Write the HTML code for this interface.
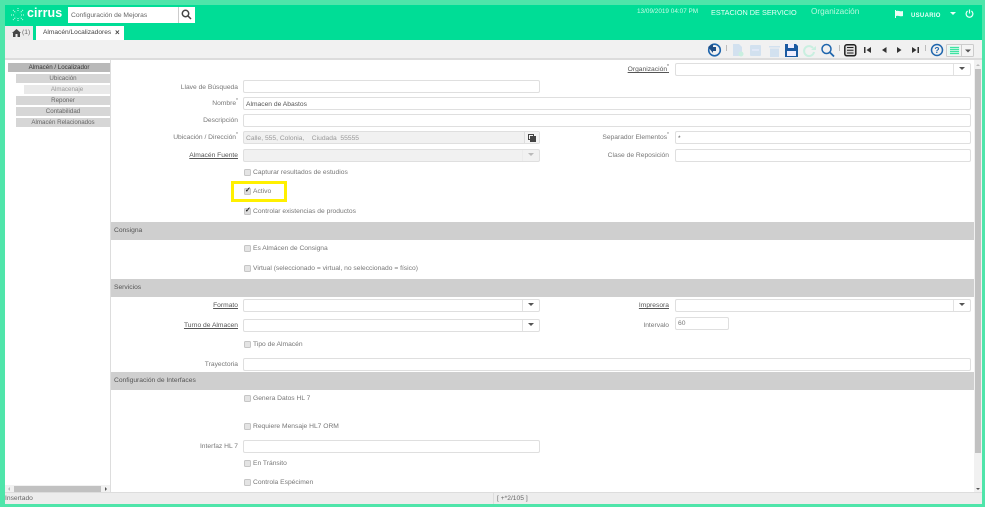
<!DOCTYPE html>
<html><head><meta charset="utf-8"><style>
html,body{margin:0;padding:0;width:985px;height:507px;overflow:hidden;background:#4fe5aa}
body{position:relative;font-family:"Liberation Sans",sans-serif;font-size:6.7px;color:#777}
#w{left:0;top:0;width:985px;height:507px;filter:blur(.35px)}
div,span,svg{position:absolute;box-sizing:border-box}
.t{white-space:nowrap;line-height:14px;height:14px}
.l{white-space:nowrap;line-height:14px;height:14px;right:747px;text-align:right}
.r{white-space:nowrap;line-height:14px;height:14px;right:316px;text-align:right}
.u{text-decoration:underline;color:#555}
.i{background:#fff;border:1px solid #dfdfdf;border-radius:2px;height:13px}
.d{background:#f1f1f1}
.b{border-left:1px solid #e2e2e2;top:0;bottom:0;right:0;width:17px}
.b:after{content:"";position:absolute;left:5px;top:3px;border:3px solid transparent;border-top:3px solid #555;border-bottom:0}
.c{left:244px;width:6.5px;height:6.5px;background:#e4e4e4;border:1px solid #c6c6c6;border-radius:1.5px}
.k{left:253px}
.s{left:111px;width:863px;height:18px;background:#cfcfcf;color:#555;padding:0 0 0 3px;line-height:18px;white-space:nowrap}
.m{text-align:center;height:9px;line-height:9px;right:875px;color:#666;white-space:nowrap;font-size:6.2px}
sup{font-size:5px;line-height:0}
</style></head><body><div id="w">
<div style="left:5px;top:5px;width:977px;height:499px;background:#fff"></div>
<div style="left:5px;top:5px;width:977px;height:35px;background:#00dd96"></div>

<svg style="left:10px;top:7px" width="16" height="16" viewBox="0 0 16 16" stroke="#d8fff0" stroke-width="1" fill="#e8fff6"><path d="M8 1v4M8 11v4M1 8h4M11 8h4M3 3l3 3M13 3l-3 3M3 13l3-3M13 13l-3-3" stroke-dasharray="1 1"/></svg>
<div class="t" style="left:27px;top:6px;color:#fff;font-size:12.5px;font-weight:bold;line-height:15px;height:15px;letter-spacing:.1px">cirrus</div>
<div style="left:68px;top:7px;width:110px;height:16px;background:#fff"></div>
<div class="t" style="left:71px;top:9px;color:#666">Configuración de Mejoras</div>
<div style="left:178px;top:7px;width:17px;height:16px;background:#fff;border-left:1px solid #ccc"></div>
<svg style="left:181px;top:9px" width="11" height="11" viewBox="0 0 11 11" fill="none" stroke="#444" stroke-width="1.5"><circle cx="4.5" cy="4.5" r="3.2"/><path d="M7 7l3 3"/></svg>

<div style="left:5px;top:26px;width:28px;height:14px;background:#ececec"></div>
<svg style="left:12px;top:29px" width="9" height="8" viewBox="0 0 9 8" fill="#444"><path d="M4.500 0L9 4H8v4H5.500V5h-2v3H1V4H0z"/></svg>
<div class="t" style="left:22px;top:26px;color:#666">(1)</div>
<div style="left:36px;top:26px;width:88px;height:14px;background:#fff"></div>
<div class="t" style="left:43px;top:26px;color:#444;font-size:6.6px">Almacén/Localizadores</div>
<div class="t" style="left:115px;top:26px;color:#444;font-size:8px;font-weight:bold">×</div>

<div class="t" style="left:637px;top:5px;color:#c9fbe6;font-size:6.4px">13/09/2019 04:07 PM</div>
<div class="t" style="left:711px;top:6px;color:#e6fff5;font-size:7.3px">ESTACION DE SERVICIO</div>
<div class="t" style="left:811px;top:5px;color:#b8f8de;font-size:8.2px">Organización</div>
<svg style="left:894px;top:10px" width="10" height="8" viewBox="0 0 10 8" fill="#eafff7"><path d="M1 0h1v8H1zM2 1c2-1 4 1 7 0v5c-3 1-5-1-7 0z"/></svg>
<div class="t" style="left:911px;top:9px;color:#eafff7;font-size:6px;font-weight:bold;letter-spacing:.3px">USUARIO</div>
<div style="left:950px;top:12px;border:3px solid transparent;border-top:3px solid #eafff7;border-bottom:0"></div>
<svg style="left:965px;top:9px" width="9" height="9" viewBox="0 0 9 9" fill="none" stroke="#eafff7" stroke-width="1.2"><path d="M2.600 2a3.400 3.400 0 1 0 3.800 0M4.500 0.500v4"/></svg>

<div style="left:5px;top:40px;width:977px;height:20px;background:#f1f1f1;border-bottom:2px solid #dcdcdc"></div>

<svg style="left:706px;top:42px" width="270" height="16" viewBox="706 42 270 16">
<circle cx="714.500" cy="50" r="5.800" fill="none" stroke="#1f66ad" stroke-width="1.600"/><path d="M708 47l5-3v3h3v4h-3v2z" fill="#1f4f86"/>
<path d="M726.500 45v6M839.500 45v6M925.500 45v6" stroke="#bbb" stroke-width="1"/>
<path d="M733 44h6l3 3v9h-9z" fill="#d2e1ef"/><circle cx="741" cy="54" r="2.500" fill="#c9efe0"/>
<rect x="750" y="45" width="11" height="11" rx="1" fill="#d2e1ef"/><path d="M752 50h7" stroke="#eef" stroke-width="1"/>
<path d="M769 46h11v1.500h-11zM770 48.500h9V57h-9z" fill="#d2e1ef"/>
<path d="M785 44h11l2 2v11h-13z" fill="#1a5aa0"/><rect x="788" y="44" width="6" height="4" fill="#eef"/><rect x="787" y="51" width="9" height="5" fill="#eef"/>
<path d="M813 48a5 5 0 1 0 1 4" fill="none" stroke="#c9efe0" stroke-width="2"/><path d="M811 50h5v-4z" fill="#c9efe0"/>
<circle cx="826.500" cy="49" r="4.500" fill="none" stroke="#1f66ad" stroke-width="1.500"/><path d="M830 52.500l4 4" stroke="#1f66ad" stroke-width="1.800"/>
<rect x="844.800" y="44.800" width="11" height="11" rx="2" fill="#ddd" stroke="#222" stroke-width="1.500"/><path d="M847 47.500h6.500M847 50.300h6.500M847 53h6.500" stroke="#222" stroke-width="1"/>
<path d="M864 47h1.500v6H864zM871 47v6l-4.500-3zM886.500 47v6l-4.500-3zM897 47v6l4.500-3zM912 47v6l4.500-3zM917.500 47h1.500v6h-1.500z" fill="#333"/>
<circle cx="937" cy="50" r="5.500" fill="none" stroke="#1f66ad" stroke-width="1.500"/>
<text x="937" y="53" font-size="8.500" font-weight="bold" fill="#1f66ad" text-anchor="middle" font-family="Liberation Sans">?</text>
<rect x="946.500" y="44.500" width="27" height="12" rx="1" fill="#f4f4f4" stroke="#ccc"/><path d="M961.500 45v11" stroke="#ccc"/>
<rect x="948" y="46" width="12" height="9" fill="#e4faf1"/>
<path d="M950 47.500h9M950 49.500h9M950 51.500h9M950 53.500h9" stroke="#3fe3a3" stroke-width="1.300"/>
<path d="M965 49.500h6l-3 3z" fill="#555"/>
</svg>

<div style="left:110px;top:60px;width:1px;height:433px;background:#ddd"></div>
<div class="m" style="left:8px;top:63px;background:#b9b9b9;color:#333">Almacén / Localizador</div>
<div class="m" style="left:16px;top:74px;background:#d6d6d6">Ubicación</div>
<div class="m" style="left:24px;top:85px;background:#e9e9e9;color:#999">Almacenaje</div>
<div class="m" style="left:16px;top:96px;background:#d6d6d6">Reponer</div>
<div class="m" style="left:16px;top:107px;background:#d6d6d6">Contabilidad</div>
<div class="m" style="left:16px;top:118px;background:#d6d6d6">Almacén Relacionados</div>

<div style="left:5px;top:485px;width:105px;height:8px;background:#f1f1f1"></div>
<div style="left:14px;top:486px;width:87px;height:6px;background:#c1c1c1"></div>
<div style="left:8px;top:487px;border:2px solid transparent;border-right:2px solid #bbb;border-left:0"></div>
<div style="left:105px;top:487px;border:2px solid transparent;border-left:2px solid #555;border-right:0"></div>

<div style="left:974px;top:60px;width:8px;height:433px;background:#f1f1f1"></div>
<div style="left:975px;top:69px;width:6px;height:384px;background:#c1c1c1"></div>
<div style="left:976px;top:64px;border:2px solid transparent;border-bottom:2px solid #bbb;border-top:0"></div>
<div style="left:976px;top:488px;border:2px solid transparent;border-top:2px solid #555;border-bottom:0"></div>

<div class="r u" style="top:63px">Organización<sup>*</sup></div>
<div class="i" style="left:675px;top:63px;width:296px"><div class="b"></div></div>

<div class="l" style="top:81px">Llave de Búsqueda</div>
<div class="i" style="left:243px;top:80px;width:297px"></div>
<div class="l" style="top:97px">Nombre<sup>*</sup></div>
<div class="i" style="left:243px;top:97px;width:728px"></div>
<div class="t" style="left:246px;top:98px;color:#555">Almacen de Abastos</div>
<div class="l" style="top:114px">Descripción</div>
<div class="i" style="left:243px;top:114px;width:728px"></div>
<div class="l" style="top:131px">Ubicación / Dirección<sup>*</sup></div>
<div class="i d" style="left:243px;top:131px;width:297px"></div>
<div class="t" style="left:246px;top:132px;color:#999">Calle, 555, Colonia, &nbsp;&nbsp; Ciudada &nbsp;55555</div>
<div style="left:524px;top:132px;width:15px;height:11px;background:#f4f4f4;border-left:1px solid #ddd"></div>
<svg style="left:528px;top:134px" width="8" height="8" viewBox="0 0 8 8" fill="none" stroke="#444"><rect x=".5" y=".5" width="5" height="5"/><rect x="2.500" y="2.500" width="5" height="5" fill="#444"/></svg>
<div class="r" style="top:131px">Separador Elementos<sup>*</sup></div>
<div class="i" style="left:675px;top:131px;width:296px"></div>
<div class="t" style="left:678px;top:132px;color:#555">*</div>
<div class="l u" style="top:149px">Almacén Fuente</div>
<div class="i d" style="left:243px;top:149px;width:297px"><div class="b" style="opacity:.35"></div></div>
<div class="r" style="top:149px">Clase de Reposición</div>
<div class="i" style="left:675px;top:149px;width:296px"></div>

<div class="c" style="top:169px"></div><div class="t k" style="top:166px">Capturar resultados de estudios</div>
<div style="left:231px;top:181px;width:56px;height:21px;border:3px solid #fff000"></div>
<div class="c" style="top:188px;background:#ddd"></div><div class="t" style="left:245px;top:184px;color:#222;font-size:7px;font-weight:bold">&#10003;</div><div class="t k" style="top:185px">Activo</div>
<div class="c" style="top:208px;background:#ddd"></div><div class="t" style="left:245px;top:204px;color:#222;font-size:7px;font-weight:bold">&#10003;</div><div class="t k" style="top:205px">Controlar existencias de productos</div>

<div class="s" style="top:222px">Consigna</div>
<div class="c" style="top:245px"></div><div class="t k" style="top:242px">Es Almácen de Consigna</div>
<div class="c" style="top:265px"></div><div class="t k" style="top:262px">Virtual (seleccionado = virtual, no seleccionado = físico)</div>

<div class="s" style="top:279px">Servicios</div>
<div class="l u" style="top:299px">Formato</div>
<div class="i" style="left:243px;top:299px;width:297px"><div class="b"></div></div>
<div class="r u" style="top:299px">Impresora</div>
<div class="i" style="left:675px;top:299px;width:296px"><div class="b"></div></div>
<div class="l u" style="top:319px">Turno de Almacen</div>
<div class="i" style="left:243px;top:319px;width:297px"><div class="b"></div></div>
<div class="r" style="top:319px">Intervalo</div>
<div class="i" style="left:675px;top:317px;width:54px"></div>
<div class="t" style="left:678px;top:317px">60</div>
<div class="c" style="top:341px"></div><div class="t k" style="top:338px">Tipo de Almacén</div>
<div class="l" style="top:358px">Trayectoria</div>
<div class="i" style="left:243px;top:358px;width:728px"></div>

<div class="s" style="top:372px">Configuración de Interfaces</div>
<div class="c" style="top:395px"></div><div class="t k" style="top:392px">Genera Datos HL 7</div>
<div class="c" style="top:423px"></div><div class="t k" style="top:420px">Requiere Mensaje HL7 ORM</div>
<div class="l" style="top:440px">Interfaz HL 7</div>
<div class="i" style="left:243px;top:440px;width:297px"></div>
<div class="c" style="top:460px"></div><div class="t k" style="top:457px">En Tránsito</div>
<div class="c" style="top:479px"></div><div class="t k" style="top:476px">Controla Espécimen</div>

<div style="left:5px;top:492px;width:977px;height:12px;background:#ededed;border-top:1px solid #ddd"></div>
<div class="t" style="left:5px;top:492px;color:#666">Insertado</div>
<div style="left:493px;top:493px;width:1px;height:11px;background:#ddd"></div>
<div class="t" style="left:497px;top:492px;color:#666">[ +*2/105 ]</div>
</div></body></html>
